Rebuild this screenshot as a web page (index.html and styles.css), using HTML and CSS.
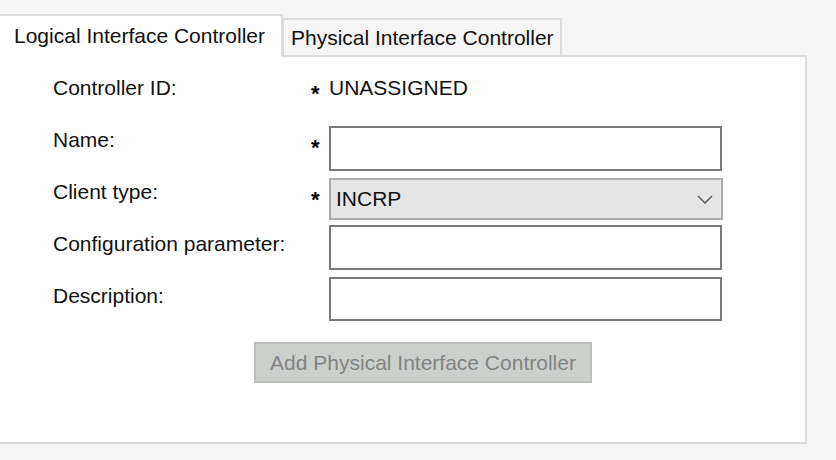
FILE: index.html
```html
<!DOCTYPE html>
<html>
<head>
<meta charset="utf-8">
<link rel="stylesheet" href="styles.css">
</head>
<body>
<div class="tabs">
  <div class="tab tab-active">Logical Interface Controller</div>
  <div class="tab tab-inactive">Physical Interface Controller</div>
</div>
<div class="panel">
  <div class="form">
    <div class="row row-id">
      <div class="label">Controller ID:</div>
      <div class="star star-id">*</div>
      <div class="value">UNASSIGNED</div>
    </div>
    <div class="row row-name">
      <div class="label label-top">Name:</div>
      <div class="star">*</div>
      <div class="input input-45"></div>
    </div>
    <div class="row row-type">
      <div class="label label-top">Client type:</div>
      <div class="star">*</div>
      <div class="select">
        <span class="select-text">INCRP</span>
        <svg class="chev" width="16" height="9" viewBox="0 0 16 9"><polyline points="1,1 8,8 15,1" fill="none" stroke="#606060" stroke-width="1.6"/></svg>
      </div>
    </div>
    <div class="row row-config">
      <div class="label label-low">Configuration parameter:</div>
      <div class="star"></div>
      <div class="input input-45"></div>
    </div>
    <div class="row row-desc">
      <div class="label label-low">Description:</div>
      <div class="star"></div>
      <div class="input input-44"></div>
    </div>
    <div class="actions">
      <div class="button">Add Physical Interface Controller</div>
    </div>
  </div>
</div>
</body>
</html>
```
FILE: styles.css
```css
* { box-sizing: border-box; }
html, body {
  margin: 0;
  padding: 0;
  background: #f5f5f5;
  font-family: "Liberation Sans", Arial, sans-serif;
  font-size: 21px;
  color: #111;
  overflow: hidden;
}
.tabs {
  display: flex;
  align-items: flex-end;
  padding-top: 14px;
  margin-left: -2px;
}
.tab {
  border: 2px solid #dcdcdc;
  border-bottom: none;
  white-space: nowrap;
}
.tab-active {
  position: relative;
  z-index: 2;
  background: #fff;
  line-height: 39px;
  padding: 0 16px 2px 14px;
  margin-bottom: -2px;
}
.tab-inactive {
  background: #f5f5f5;
  line-height: 35px;
  padding: 0 6px 0 7px;
  margin-left: -1px;
}
.panel {
  margin-left: -2px;
  width: 809px;
  height: 389px;
  background: #fff;
  border: 2px solid #dcdcdc;
}
.form {
  padding: 19px 0 0 53px;
  display: flex;
  flex-direction: column;
}
.row {
  display: flex;
  align-items: flex-start;
}
.row-id { height: 24px; }
.label {
  width: 252px;
  line-height: 24px;
}
.label-top { padding-top: 2px; }
.label-low { padding-top: 7px; }
.star {
  width: 24px;
  padding-left: 6px;
  font-weight: bold;
  font-size: 22px;
  line-height: 24px;
  padding-top: 10px;
  color: #000;
}
.star-id { padding-top: 6px; }
.value { line-height: 24px; }
.row-name { margin-top: 26px; }
.row-type { margin-top: 7px; }
.row-config { margin-top: 5px; }
.row-desc { margin-top: 7px; }
.input {
  width: 393px;
  border: 2px solid #7a7a7a;
  background: #fff;
}
.input-45 { height: 45px; }
.input-44 { height: 44px; }
.select {
  width: 394px;
  height: 42px;
  border: 2px solid #adadad;
  background: #e5e5e5;
  display: flex;
  align-items: center;
  justify-content: space-between;
  padding: 0 8px 0 5px;
}
.select-text { line-height: 24px; }
.chev { display: block; }
.actions {
  margin-top: 21px;
  padding-left: 201px;
}
.button {
  width: 338px;
  height: 41px;
  border: 2px solid #bcbfbc;
  background: #ccd0cc;
  color: #838383;
  display: flex;
  align-items: center;
  justify-content: center;
  white-space: nowrap;
}
```
